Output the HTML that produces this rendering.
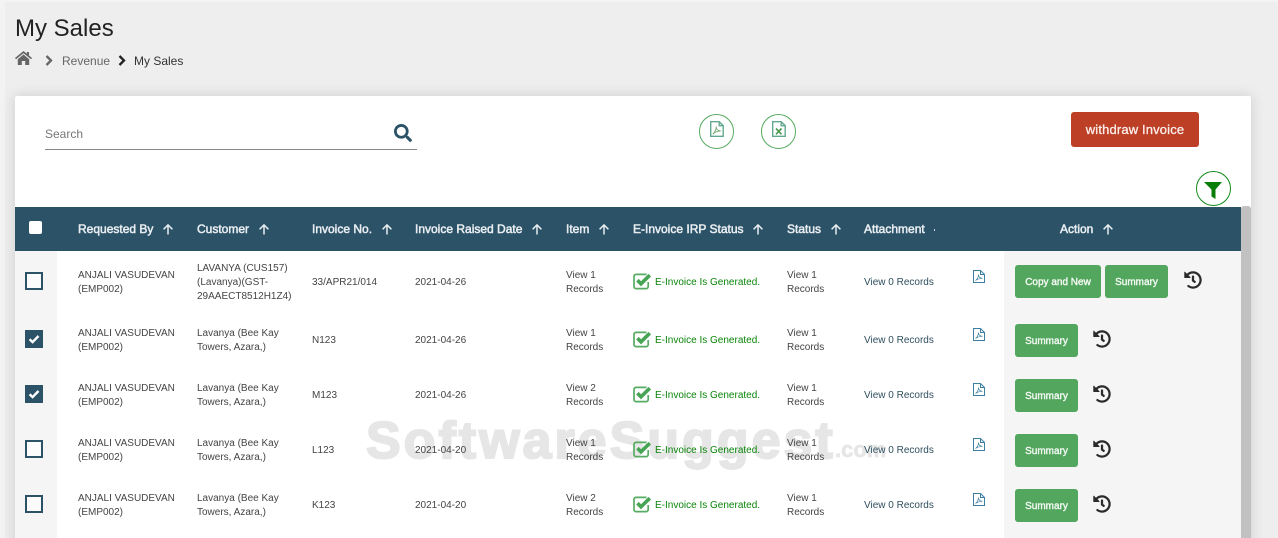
<!DOCTYPE html>
<html lang="en"><head><meta charset="utf-8"><title>My Sales</title>
<style>
html,body{margin:0;padding:0;width:1278px;height:538px;overflow:hidden;background:#f3f3f3}
body{position:relative;font-family:"Liberation Sans",Arial,sans-serif;color:#333}
.a{position:absolute;white-space:nowrap}
svg{position:absolute;display:block;overflow:visible}
#bg{position:absolute;left:5px;top:2px;right:0;bottom:0;background:#eee}
#card{position:absolute;left:15px;top:96px;width:1236px;height:460px;background:#fff;box-shadow:0 0 14px rgba(0,0,0,.14);border-radius:2px 2px 0 0}
.bc{font-size:12px;line-height:14px}
#head{position:absolute;left:15px;top:207px;width:1226px;height:44px;background:#2c5268}
.h{position:absolute;top:229px;margin-top:-7px;font-size:12px;line-height:14px;color:#e9eef1;white-space:nowrap;-webkit-text-stroke:.5px #e9eef1}
.row{position:absolute;left:0;width:1278px;height:28px}
.c{position:absolute;font-size:10px;line-height:14px;color:#444;white-space:nowrap}
.s{top:7px}
.g{color:#0a850a;left:655px;top:7px}
.v{color:#2f4f5f}
.cb{position:absolute;left:25px;top:3px;width:14px;height:14px;border:2px solid #2c5268;background:#fbfbfb}
.cb.on{background:#2c5268}
.btn{position:absolute;height:33px;line-height:35px;background:#53a65d;color:#f2f8f3;font-size:10px;text-align:center;border-radius:3px;-webkit-text-stroke:.4px #f2f8f3}
.circ{position:absolute;width:33px;height:33px;border:1px solid #57ab62;border-radius:50%;background:#fff}
</style></head><body>
<div id="bg"></div>
<svg width="0" height="0" style="position:absolute"><defs>
<symbol id="hist" viewBox="0 0 512 512"><path fill="#2b2b2b" d="M504 255.531c.253 136.64-111.18 248.372-247.82 248.468-59.015.042-113.223-20.53-155.822-54.911-11.077-8.94-11.905-25.541-1.839-35.607l11.267-11.267c8.609-8.609 22.353-9.551 31.891-1.984C173.062 425.135 212.781 440 256 440c101.705 0 184-82.311 184-184 0-101.705-82.311-184-184-184-48.814 0-93.149 18.969-126.068 49.932l50.754 50.754c10.08 10.08 2.941 27.314-11.313 27.314H24c-8.837 0-16-7.163-16-16V38.627c0-14.254 17.234-21.393 27.314-11.314l49.372 49.372C129.209 34.136 189.552 8 256 8c136.81 0 247.747 110.78 248 247.531zm-180.912 78.784l9.823-12.63c8.138-10.463 6.253-25.542-4.21-33.679L288 256.349V152c0-13.255-10.745-24-24-24h-16c-13.255 0-24 10.745-24 24v135.651l65.409 50.874c10.463 8.137 25.541 6.253 33.679-4.21z"/></symbol>
<symbol id="up" viewBox="0 0 12 12"><path d="M6 11V1.500M1.600 5.800L6 1.400l4.400 4.400" fill="none" stroke="#e9eef1" stroke-width="1.500"/></symbol>
<symbol id="tick" viewBox="0 0 19 17"><path d="M15.200 9v4.600a2 2 0 0 1-2 2H3a2 2 0 0 1-2-2V3.400a2 2 0 0 1 2-2h10.500" fill="none" stroke="#57ab62" stroke-width="1.700"/><path d="M4.400 7.200l3.600 3.600L16.800 2.200" fill="none" stroke="#48a455" stroke-width="3.600"/></symbol>
<symbol id="pdf" viewBox="0 0 12 13"><path d="M.5.500h7l4 4v8H.500zM7.500.5v4h4" fill="none" stroke="#3d7fa3" stroke-width="1"/><path d="M2.500 10.500C4.500 9 5.500 6.500 5.500 4.500c0 2.500 1.500 3.500 4 3.800-2.500 0-5 .7-7 2.200z" fill="none" stroke="#3d7fa3" stroke-width=".7"/></symbol>
<symbol id="chk" viewBox="0 0 14 14"><path d="M2.600 7.300l3 2.800L11.500 4" fill="none" stroke="#fff" stroke-width="2.400"/></symbol>
</defs></svg>

<div class="a" style="left:15px;top:15px;font-size:24px;line-height:28px;color:#222">My Sales</div>
<svg style="left:15px;top:51px" width="17" height="14" viewBox="0 0 17 14"><path d="M8.500 0L0 7l1 1.200L8.500 2.200l7.500 6L17 7l-3-2.500V1h-2.200v1.700zM2.800 8.300V14h4v-4h3.400v4h4V8.300L8.500 3.500z" fill="#666"/></svg>
<svg style="left:45px;top:55px" width="8" height="11"><path d="M1.500 1l4.500 4.500L1.500 10" fill="none" stroke="#666" stroke-width="2.300"/></svg>
<div class="a bc" style="left:62px;top:54px;color:#666">Revenue</div>
<svg style="left:118px;top:55px" width="8" height="11"><path d="M1.500 1l4.500 4.500L1.500 10" fill="none" stroke="#222" stroke-width="2.300"/></svg>
<div class="a bc" style="left:134px;top:54px;color:#333">My Sales</div>

<div id="card"></div>
<div class="a" style="left:45px;top:127px;font-size:12px;line-height:14px;color:#777">Search</div>
<div class="a" style="left:45px;top:149px;width:372px;height:1px;background:#888"></div>
<svg style="left:394px;top:124px" width="18" height="18" viewBox="0 0 512 512"><path fill="#2c5268" d="M505 442.700L405.300 343c-4.500-4.500-10.600-7-17-7H372c27.600-35.300 44-79.700 44-128C416 93.100 322.900 0 208 0S0 93.100 0 208s93.100 208 208 208c48.300 0 92.700-16.400 128-44v16.300c0 6.400 2.500 12.500 7 17l99.700 99.700c9.400 9.400 24.600 9.400 33.900 0l28.300-28.300c9.400-9.400 9.400-24.600.1-34zM208 336c-70.700 0-128-57.200-128-128 0-70.700 57.200-128 128-128 70.700 0 128 57.200 128 128 0 70.700-57.200 128-128 128z"/></svg>

<div class="circ" style="left:699px;top:114px"></div>
<svg style="left:710px;top:121px" width="14" height="16" viewBox="0 0 14 16"><path d="M.7.700h8.500l4 4v10.600H.700zM9.200.7v4h4" fill="none" stroke="#62a98f" stroke-width="1.400"/><path d="M2.800 13.300C4.800 11 6.300 8 6.300 5.500c0 3 1.500 4 4.500 4.500-3 0-6 1-8 3.300z" fill="none" stroke="#7fb07c" stroke-width="1"/></svg>
<div class="circ" style="left:761px;top:114px"></div>
<svg style="left:772px;top:121px" width="14" height="16" viewBox="0 0 14 16"><path d="M.7.700h8.500l4 4v10.600H.700zM9.200.7v4h4" fill="none" stroke="#62a98f" stroke-width="1.400"/><path d="M4 7.500l5.500 5.800M9.500 7.500L4 13.300" stroke="#4f9a55" stroke-width="1.700"/></svg>
<div class="a" style="left:1071px;top:112px;width:128px;height:35px;line-height:35px;background:#bc3f26;color:#fbeeea;font-size:13px;text-align:center;border-radius:3px;letter-spacing:.15px;-webkit-text-stroke:.3px #fbeeea">withdraw Invoice</div>
<div class="circ" style="left:1196px;top:171px;border-color:#128a1c"></div>
<svg style="left:1204px;top:182px" width="18" height="17" viewBox="0 0 18 17"><path d="M0 0h18l-6.500 7.500V17l-4-2.500V7.500z" fill="#087e08"/></svg>

<div id="head"></div>
<div class="a" style="left:29px;top:221px;width:13px;height:13px;background:#fff;border-radius:2px"></div>
<div class="h" style="left:78px">Requested By</div><svg style="left:162px;top:223px" width="12" height="13"><use href="#up"/></svg>
<div class="h" style="left:197px">Customer</div><svg style="left:258px;top:223px" width="12" height="13"><use href="#up"/></svg>
<div class="h" style="left:312px">Invoice No.</div><svg style="left:381px;top:223px" width="12" height="13"><use href="#up"/></svg>
<div class="h" style="left:415px">Invoice Raised Date</div><svg style="left:531px;top:223px" width="12" height="13"><use href="#up"/></svg>
<div class="h" style="left:566px">Item</div><svg style="left:598px;top:223px" width="12" height="13"><use href="#up"/></svg>
<div class="h" style="left:633px">E-Invoice IRP Status</div><svg style="left:752px;top:223px" width="12" height="13"><use href="#up"/></svg>
<div class="h" style="left:787px">Status</div><svg style="left:830px;top:223px" width="12" height="13"><use href="#up"/></svg>
<div class="h" style="left:864px">Attachment</div><div class="a" style="left:934px;top:229px;width:1px;height:2px;background:#cfd9de"></div>
<div class="h" style="left:1060px">Action</div><svg style="left:1102px;top:223px" width="12" height="13"><use href="#up"/></svg>

<div class="a" style="left:15px;top:251px;width:42px;height:287px;background:#f5f5f5"></div>
<div class="a" style="left:1004px;top:251px;width:237px;height:287px;background:#f5f5f5"></div>
<div class="a" style="left:1241px;top:206px;width:10px;height:332px;background:#c1c1c1;border-radius:3px 3px 0 0"></div>

<div class="a" style="left:366px;top:411px;font-size:52px;line-height:60px;font-weight:bold;color:#e6e6e6;letter-spacing:3px;-webkit-text-stroke:2px #e6e6e6">SoftwareSuggest</div>
<div class="a" style="left:835px;top:435px;font-size:22px;line-height:30px;font-weight:bold;color:#e6e6e6;-webkit-text-stroke:.6px #e6e6e6">.com</div>

<div class="row" style="top:269px">
<div class="cb"></div>
<div class="c" style="left:78px;top:0">ANJALI VASUDEVAN<br>(EMP002)</div>
<div class="c" style="left:197px;top:-7px">LAVANYA (CUS157)<br>(Lavanya)(GST-<br>29AAECT8512H1Z4)</div>
<div class="c s" style="left:312px">33/APR21/014</div>
<div class="c s" style="left:415px">2021-04-26</div>
<div class="c" style="left:566px;top:0">View 1<br>Records</div>
<svg style="left:633px;top:4px" width="19" height="17"><use href="#tick"/></svg>
<div class="c g">E-Invoice Is Generated.</div>
<div class="c" style="left:787px;top:0">View 1<br>Records</div>
<div class="c s v" style="left:864px">View 0 Records</div>
<svg style="left:973px;top:1px" width="12" height="13"><use href="#pdf"/></svg>
<div class="btn" style="left:1015px;top:-4px;width:86px">Copy and New</div>
<div class="btn" style="left:1105px;top:-4px;width:63px">Summary</div>
<svg style="left:1184px;top:2px" width="18" height="18"><use href="#hist"/></svg>
</div>

<div class="row" style="top:327px">
<div class="cb on"></div><svg style="left:27px;top:5px" width="14" height="14"><use href="#chk"/></svg>
<div class="c" style="left:78px;top:0">ANJALI VASUDEVAN<br>(EMP002)</div>
<div class="c" style="left:197px;top:0">Lavanya (Bee Kay<br>Towers, Azara,)</div>
<div class="c s" style="left:312px">N123</div>
<div class="c s" style="left:415px">2021-04-26</div>
<div class="c" style="left:566px;top:0">View 1<br>Records</div>
<svg style="left:633px;top:4px" width="19" height="17"><use href="#tick"/></svg>
<div class="c g">E-Invoice Is Generated.</div>
<div class="c" style="left:787px;top:0">View 1<br>Records</div>
<div class="c s v" style="left:864px">View 0 Records</div>
<svg style="left:973px;top:1px" width="12" height="13"><use href="#pdf"/></svg>
<div class="btn" style="left:1015px;top:-3px;width:63px">Summary</div>
<svg style="left:1093px;top:3px" width="18" height="18"><use href="#hist"/></svg>
</div>

<div class="row" style="top:382px">
<div class="cb on"></div><svg style="left:27px;top:5px" width="14" height="14"><use href="#chk"/></svg>
<div class="c" style="left:78px;top:0">ANJALI VASUDEVAN<br>(EMP002)</div>
<div class="c" style="left:197px;top:0">Lavanya (Bee Kay<br>Towers, Azara,)</div>
<div class="c s" style="left:312px">M123</div>
<div class="c s" style="left:415px">2021-04-26</div>
<div class="c" style="left:566px;top:0">View 2<br>Records</div>
<svg style="left:633px;top:4px" width="19" height="17"><use href="#tick"/></svg>
<div class="c g">E-Invoice Is Generated.</div>
<div class="c" style="left:787px;top:0">View 1<br>Records</div>
<div class="c s v" style="left:864px">View 0 Records</div>
<svg style="left:973px;top:1px" width="12" height="13"><use href="#pdf"/></svg>
<div class="btn" style="left:1015px;top:-3px;width:63px">Summary</div>
<svg style="left:1093px;top:3px" width="18" height="18"><use href="#hist"/></svg>
</div>

<div class="row" style="top:437px">
<div class="cb"></div>
<div class="c" style="left:78px;top:0">ANJALI VASUDEVAN<br>(EMP002)</div>
<div class="c" style="left:197px;top:0">Lavanya (Bee Kay<br>Towers, Azara,)</div>
<div class="c s" style="left:312px">L123</div>
<div class="c s" style="left:415px">2021-04-20</div>
<div class="c" style="left:566px;top:0">View 1<br>Records</div>
<svg style="left:633px;top:4px" width="19" height="17"><use href="#tick"/></svg>
<div class="c g">E-Invoice Is Generated.</div>
<div class="c" style="left:787px;top:0">View 1<br>Records</div>
<div class="c s v" style="left:864px">View 0 Records</div>
<svg style="left:973px;top:1px" width="12" height="13"><use href="#pdf"/></svg>
<div class="btn" style="left:1015px;top:-3px;width:63px">Summary</div>
<svg style="left:1093px;top:3px" width="18" height="18"><use href="#hist"/></svg>
</div>

<div class="row" style="top:492px">
<div class="cb"></div>
<div class="c" style="left:78px;top:0">ANJALI VASUDEVAN<br>(EMP002)</div>
<div class="c" style="left:197px;top:0">Lavanya (Bee Kay<br>Towers, Azara,)</div>
<div class="c s" style="left:312px">K123</div>
<div class="c s" style="left:415px">2021-04-20</div>
<div class="c" style="left:566px;top:0">View 2<br>Records</div>
<svg style="left:633px;top:4px" width="19" height="17"><use href="#tick"/></svg>
<div class="c g">E-Invoice Is Generated.</div>
<div class="c" style="left:787px;top:0">View 1<br>Records</div>
<div class="c s v" style="left:864px">View 0 Records</div>
<svg style="left:973px;top:1px" width="12" height="13"><use href="#pdf"/></svg>
<div class="btn" style="left:1015px;top:-3px;width:63px">Summary</div>
<svg style="left:1093px;top:3px" width="18" height="18"><use href="#hist"/></svg>
</div>
</body></html>
